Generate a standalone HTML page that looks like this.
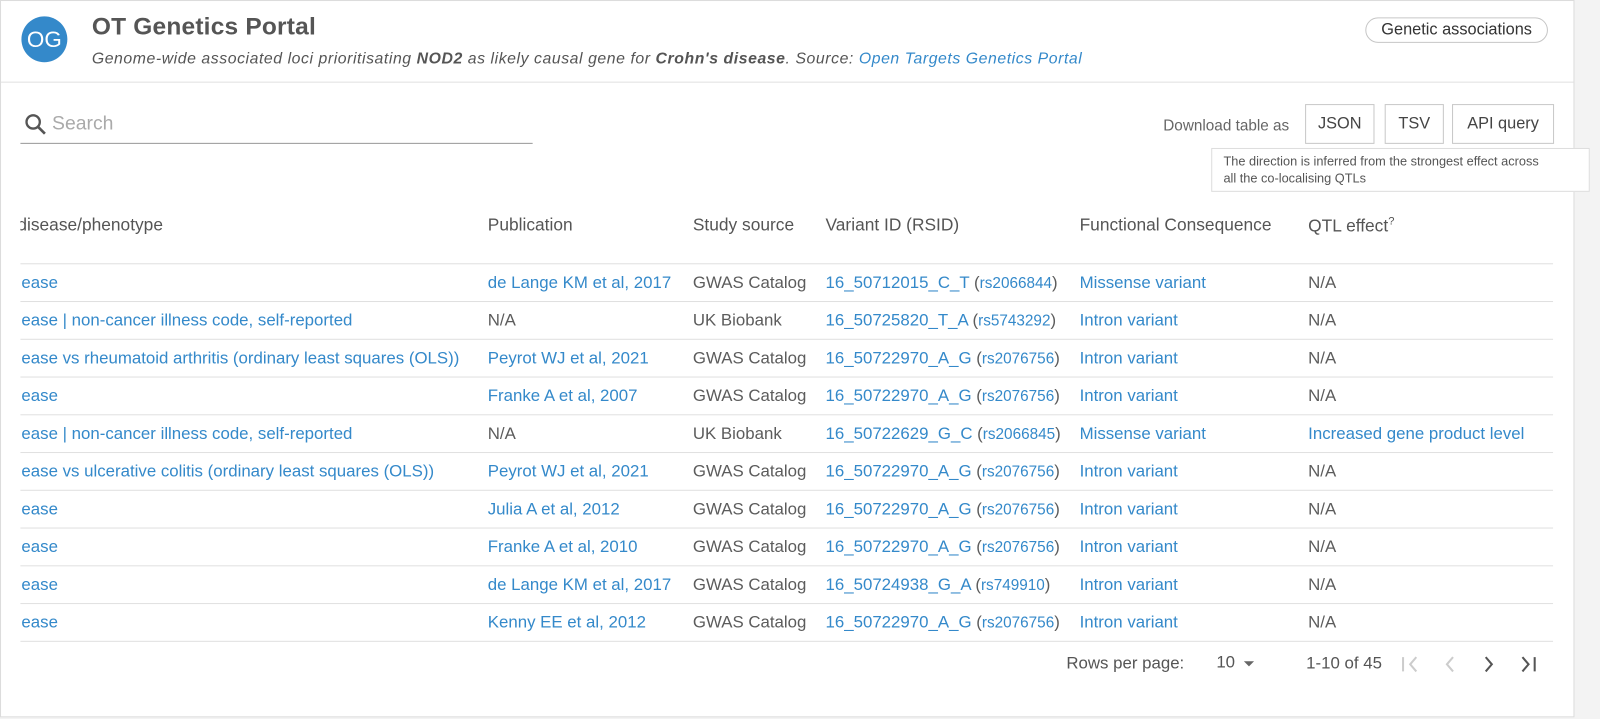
<!DOCTYPE html>
<html><head><meta charset="utf-8"><style>
*{margin:0;padding:0;box-sizing:border-box}
body{width:1600px;height:719px;background:#f3f3f3;font-family:"Liberation Sans",Arial,sans-serif;color:#5c5c5c;position:relative;overflow:hidden}
#w{position:absolute;left:0;top:0;width:1568px;height:705px;transform:scale(1.0204);transform-origin:0 0}
.card{position:absolute;left:0;top:0;width:1543px;height:703px;background:#fff;border:1px solid #dcdcdc}
.a{position:absolute;white-space:nowrap}
.l{color:#3489ca}
.t{font-size:16.5px}
.hr{position:absolute;left:20px;width:1502px;height:1px;background:#e0e0e0}
.btn{position:absolute;top:102px;height:39px;border:1px solid #c8c8c8;font-size:16px;color:#444;text-align:center;line-height:37px}
</style></head><body><div id="w">
<div class="card"></div>
<div class="a" style="left:21px;top:16px;width:45px;height:45px;border-radius:50%;background:#3489ca;color:#fff;font-size:22px;text-align:center;line-height:45px">OG</div>
<div class="a" style="left:90px;top:13px;font-size:24px;font-weight:bold;color:#555;letter-spacing:0.2px">OT Genetics Portal</div>
<div class="a" style="left:90px;top:49px;font-size:15.5px;font-style:italic;color:#555;letter-spacing:0.55px">Genome-wide associated loci prioritisating <b>NOD2</b> as likely causal gene for <b>Crohn's disease</b>. Source: <span class="l">Open Targets Genetics Portal</span></div>
<div class="a" style="left:1338px;top:17px;width:179px;height:25px;border:1px solid #c6c6c6;border-radius:13px;font-size:16px;color:#333;text-align:center;line-height:23px">Genetic associations</div>
<div class="a" style="left:1px;top:80px;width:1541px;height:1px;background:#e0e0e0"></div>
<svg class="a" style="left:23px;top:110px" width="24" height="24" viewBox="0 0 24 24"><circle cx="9.5" cy="9.5" r="6.5" fill="none" stroke="#555" stroke-width="2.3"/><path d="M14.5 14.5L21 21" stroke="#555" stroke-width="2.6"/></svg>
<div class="a" style="left:51px;top:111px;font-size:19px;color:#aaa">Search</div>
<div class="a" style="left:20px;top:140px;width:502px;height:1px;background:#999"></div>
<div class="a" style="left:1140px;top:115px;font-size:15px;color:#666">Download table as</div>
<div class="btn" style="left:1279px;width:68px">JSON</div>
<div class="btn" style="left:1357px;width:58px">TSV</div>
<div class="btn" style="left:1423px;width:100px">API query</div>
<div class="a" style="left:1187px;top:145px;width:371px;height:43px;background:#fff;border:1px solid #ddd;font-size:12.5px;color:#555;padding:4px 11px;line-height:17px">The direction is inferred from the strongest effect across<br>all the co-localising QTLs</div>
<div class="a t" style="left:20px;top:211px;font-size:17px;color:#555;overflow:hidden;width:160px"><span style="margin-left:-3px">disease/phenotype</span></div>
<div class="a t" style="left:478px;top:211px;font-size:17px;color:#555">Publication</div>
<div class="a t" style="left:679px;top:211px;font-size:17px;color:#555">Study source</div>
<div class="a t" style="left:809px;top:211px;font-size:17px;color:#555">Variant ID (RSID)</div>
<div class="a t" style="left:1058px;top:211px;font-size:17px;color:#555">Functional Consequence</div>
<div class="a t" style="left:1282px;top:211px;font-size:17px;color:#555">QTL effect<sup style="font-size:11px">?</sup></div>
<div class="hr" style="top:258px"></div>
<div id="rows"></div>
<div class="a" style="left:1045px;top:641px;font-size:16.5px;color:#555">Rows per page:</div>
<div class="a" style="left:1192px;top:640px;font-size:16.5px;color:#555">10</div>
<svg class="a" style="left:1218px;top:647px" width="12" height="8"><path d="M1 1h10L6 6z" fill="#666"/></svg>
<div class="a" style="left:1280px;top:641px;font-size:16.5px;color:#555">1-10 of 45</div>
<svg class="a" style="left:1372px;top:641px" width="140" height="20" viewBox="0 0 140 20"><g fill="none" stroke-width="2"><path d="M3 3v14M16 3l-6 7 6 7" stroke="#ccc"/><path d="M52 3l-6 7 6 7" stroke="#ccc"/><path d="M84 3l6 7-6 7" stroke="#555"/><path d="M120 3l6 7-6 7M132 3v14" stroke="#555"/></g></svg>
</div>
<script>
var d=[
["ease","de Lange KM et al, 2017","GWAS Catalog","16_50712015_C_T","rs2066844","Missense variant","N/A"],
["ease | non-cancer illness code, self-reported","N/A","UK Biobank","16_50725820_T_A","rs5743292","Intron variant","N/A"],
["ease vs rheumatoid arthritis (ordinary least squares (OLS))","Peyrot WJ et al, 2021","GWAS Catalog","16_50722970_A_G","rs2076756","Intron variant","N/A"],
["ease","Franke A et al, 2007","GWAS Catalog","16_50722970_A_G","rs2076756","Intron variant","N/A"],
["ease | non-cancer illness code, self-reported","N/A","UK Biobank","16_50722629_G_C","rs2066845","Missense variant","Increased gene product level"],
["ease vs ulcerative colitis (ordinary least squares (OLS))","Peyrot WJ et al, 2021","GWAS Catalog","16_50722970_A_G","rs2076756","Intron variant","N/A"],
["ease","Julia A et al, 2012","GWAS Catalog","16_50722970_A_G","rs2076756","Intron variant","N/A"],
["ease","Franke A et al, 2010","GWAS Catalog","16_50722970_A_G","rs2076756","Intron variant","N/A"],
["ease","de Lange KM et al, 2017","GWAS Catalog","16_50724938_G_A","rs749910","Intron variant","N/A"],
["ease","Kenny EE et al, 2012","GWAS Catalog","16_50722970_A_G","rs2076756","Intron variant","N/A"]];
var h="";
d.forEach(function(r,i){var y=268+i*37;
h+='<div class="a t l" style="left:21px;top:'+y+'px">'+r[0]+'</div>';
h+='<div class="a t '+(r[1]=="N/A"?'':'l')+'" style="left:478px;top:'+y+'px">'+r[1]+'</div>';
h+='<div class="a t" style="left:679px;top:'+y+'px">'+r[2]+'</div>';
h+='<div class="a t" style="left:809px;top:'+y+'px"><span class="l">'+r[3]+'</span> (<span class="l" style="font-size:15px">'+r[4]+'</span>)</div>';
h+='<div class="a t l" style="left:1058px;top:'+y+'px">'+r[5]+'</div>';
h+='<div class="a t '+(r[6]=="N/A"?'':'l')+'" style="left:1282px;top:'+y+'px">'+r[6]+'</div>';
h+='<div class="hr" style="top:'+(295+i*37)+'px"></div>';});
document.getElementById("rows").innerHTML=h;
</script>
</body></html>
